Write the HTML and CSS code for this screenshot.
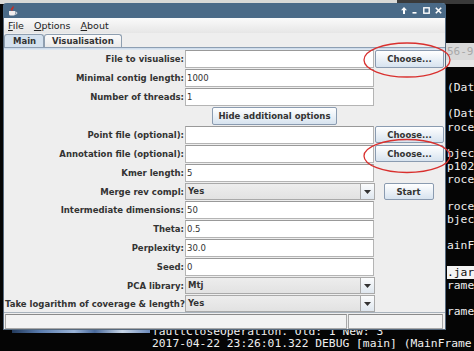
FILE: index.html
```html
<!DOCTYPE html>
<html>
<head>
<meta charset="utf-8">
<link rel="stylesheet" href="styles.css">
</head>
<body>
<div class="desk">
  <div class="topstrip"><div class="ts-light"></div><div class="ts-dark"></div></div>
  <div class="graybox">56-9</div>
  <pre class="term-right">(Dat

(Dat
roce

bjec
p102
roce

roce
bjec

ainF

<span class="hl">.jar</span>
rame

rame

</pre>
  <div class="strip"></div>
  <pre class="term-bottom">faultCloseOperation. Old: 1 New: 3
2017-04-22 23:26:01.322 DEBUG [main] (MainFrame</pre>

  <div class="appwin">
    <div class="titlebar">
      <svg class="appicon" width="11" height="11" viewBox="0 0 11 11">
        <path d="M2 6 H8 V9 Q8 10.5 6.5 10.5 H3.5 Q2 10.5 2 9 Z" fill="#f2eeee"/>
        <path d="M8 7 Q10 7 10 8 Q10 9.2 8 9.2" fill="none" stroke="#f2eeee" stroke-width="0.9"/>
        <path d="M4 5.5 Q3 3.5 5 2.5 Q6.5 1.5 5.5 0.5 Q8 2 6 4 Q5 5 6 5.5 Z" fill="#c0302a"/>
      </svg>
      <div class="tbtns">
        <svg width="6" height="7" viewBox="0 0 6 7"><path d="M3 0 L6 3.2 H4 V7 H2 V3.2 H0 Z" fill="#fff"/></svg>
        <svg width="6" height="7" viewBox="0 0 6 7"><rect x="0.5" y="5" width="4" height="1.6" fill="#fff"/></svg>
        <svg width="7" height="7" viewBox="0 0 7 7"><rect x="0.8" y="0.8" width="5.4" height="5.4" fill="none" stroke="#fff" stroke-width="1.4"/></svg>
        <svg width="7" height="7" viewBox="0 0 7 7"><path d="M0.8 0.8 L6.2 6.2 M6.2 0.8 L0.8 6.2" stroke="#fff" stroke-width="1.6"/></svg>
      </div>
    </div>
    <div class="menubar">
      <span class="menu"><u>F</u>ile</span>
      <span class="menu"><u>O</u>ptions</span>
      <span class="menu"><u>A</u>bout</span>
    </div>
    <div class="tabs">
      <div class="tab sel">Main</div>
      <div class="tab">Visualisation</div>
    </div>
    <div class="panel">
      <div class="form">
        <div class="lbl">File to visualise:</div>
        <div class="field"></div>
        <div class="btn choose">Choose...</div>

        <div class="lbl">Minimal contig length:</div>
        <div class="field">1000</div>
        <div class="empty"></div>

        <div class="lbl">Number of threads:</div>
        <div class="field">1</div>
        <div class="empty"></div>

        <div class="empty"></div>
        <div class="hidecell"><div class="btn hide">Hide additional options</div></div>
        <div class="empty"></div>

        <div class="lbl">Point file (optional):</div>
        <div class="field"></div>
        <div class="btn choose short">Choose...</div>

        <div class="lbl">Annotation file (optional):</div>
        <div class="field"></div>
        <div class="btn choose short">Choose...</div>

        <div class="lbl">Kmer length:</div>
        <div class="field">5</div>
        <div class="empty"></div>

        <div class="lbl">Merge rev compl:</div>
        <div class="combo"><span class="cval">Yes</span><span class="carrow"><svg width="7" height="4" viewBox="0 0 7 4"><path d="M0 0 H7 L3.5 4 Z" fill="#333"/></svg></span></div>
        <div class="startcell"><div class="btn start">Start</div></div>

        <div class="lbl">Intermediate dimensions:</div>
        <div class="field">50</div>
        <div class="empty"></div>

        <div class="lbl">Theta:</div>
        <div class="field">0.5</div>
        <div class="empty"></div>

        <div class="lbl">Perplexity:</div>
        <div class="field">30.0</div>
        <div class="empty"></div>

        <div class="lbl">Seed:</div>
        <div class="field">0</div>
        <div class="empty"></div>

        <div class="lbl">PCA library:</div>
        <div class="combo"><span class="cval">Mtj</span><span class="carrow"><svg width="7" height="4" viewBox="0 0 7 4"><path d="M0 0 H7 L3.5 4 Z" fill="#333"/></svg></span></div>
        <div class="empty"></div>

        <div class="lbl">Take logarithm of coverage &amp; length?</div>
        <div class="combo"><span class="cval">Yes</span><span class="carrow"><svg width="7" height="4" viewBox="0 0 7 4"><path d="M0 0 H7 L3.5 4 Z" fill="#333"/></svg></span></div>
        <div class="empty"></div>
      </div>
    </div>
    <div class="status">
      <div class="sfield s1"></div>
      <div class="sfield s2"></div>
    </div>
  </div>

  <svg class="ring ring1" width="90" height="38" viewBox="0 0 90 38"><ellipse cx="45" cy="19" rx="43" ry="17" fill="none" stroke="#d9302e" stroke-width="1.3"/></svg>
  <svg class="ring ring2" width="90" height="38" viewBox="0 0 90 38"><ellipse cx="45" cy="19" rx="43" ry="16.5" fill="none" stroke="#d9302e" stroke-width="1.3"/></svg>
</div>
</body>
</html>
```

FILE: styles.css
```css
html, body {
  margin: 0;
  padding: 0;
  background: #000;
}
.desk {
  position: relative;
  width: 474px;
  height: 351px;
  overflow: hidden;
  background: #050505;
  font-family: "DejaVu Sans", sans-serif;
}
.topstrip {
  position: absolute;
  left: 0;
  top: 0;
  width: 474px;
  height: 4px;
  display: flex;
}
.ts-light { width: 397px; background: #d9d9d6; }
.ts-dark { flex: 1; background: #3a3a3a; }

.graybox {
  position: absolute;
  left: 440px;
  top: 43px;
  width: 34px;
  height: 24px;
  background: linear-gradient(#d9d9d9 0, #d9d9d9 17px, #e6e6e6 17px);
  color: #a8a8a8;
  font-family: "DejaVu Sans Mono", monospace;
  font-size: 11px;
  line-height: 18px;
  box-sizing: border-box;
  padding-left: 7px;
}

.term-right {
  position: absolute;
  left: 447px;
  top: 81px;
  margin: 0;
  font-family: "DejaVu Sans Mono", monospace;
  font-size: 11.3px;
  line-height: 13.2px;
  color: #eeeeee;
}
.term-right .hl {
  background: #f4f4f4;
  color: #111;
}
.strip {
  position: absolute;
  left: 12px;
  top: 329px;
  width: 138px;
  height: 4px;
  background: linear-gradient(90deg, #233a5c, #5a7cae 20%, #9ab4d8 45%, #4a6a9c 60%, #c8d6e8 80%, #6d8bbb);
}
.term-bottom {
  position: absolute;
  left: 152px;
  top: 326px;
  margin: 0;
  font-family: "DejaVu Sans Mono", monospace;
  font-size: 11.3px;
  line-height: 12.4px;
  color: #f0f0f0;
}

.appwin {
  position: absolute;
  left: 3px;
  top: 3px;
  width: 443px;
  height: 327px;
  display: flex;
  flex-direction: column;
  background: #eeeeee;
  box-sizing: border-box;
  border-left: 1px solid #56697d;
  border-right: 1px solid #56697d;
  border-bottom: 1px solid #56697d;
  border-radius: 4px 4px 0 0;
}
.titlebar {
  height: 15px;
  flex: none;
  background: #4a6a87;
  border-radius: 4px 4px 0 0;
  display: flex;
  align-items: center;
  padding: 0 4px 0 4px;
  margin: 0 -1px;
}
.appicon { display: block; }
.tbtns {
  margin-left: auto;
  display: flex;
  align-items: center;
  gap: 5px;
}
.tbtns svg { display: block; }

.menubar {
  height: 15px;
  flex: none;
  background: linear-gradient(#fafafa, #e6e6e6);
  display: flex;
  align-items: center;
  gap: 10px;
  padding-left: 4px;
  font-size: 9.5px;
  color: #222;
}
.menu u { text-decoration: underline; text-underline-offset: 1px; }

.tabs {
  height: 14px;
  flex: none;
  display: flex;
  align-items: flex-end;
  padding-left: 0;
}
.tab {
  height: 13px;
  box-sizing: border-box;
  border: 1px solid #8f9fb0;
  border-bottom: none;
  border-radius: 3px 3px 0 0;
  padding: 0 7px;
  font-size: 8.5px;
  font-weight: bold;
  color: #333;
  line-height: 12px;
  background: linear-gradient(#fbfbfb, #eaeaea);
}
.tab.sel {
  background: #d4e1ee;
  padding: 0 8px;
  width: 40px;
  text-align: center;
}

.panel {
  flex: none;
  border-top: 1px solid #8d9fb3;
  box-shadow: inset 0 1px 0 #cfdceb, inset 0 2px 0 #dde7f1;
  padding-top: 2px;
  border-bottom: 1px solid #a9b3bd;
}
.form {
  display: grid;
  grid-template-columns: 181px 189px 1fr;
  grid-template-rows: repeat(7, 18px) 17px repeat(4, 18px) 17px 17px;
  row-gap: 1px;
}
.lbl {
  font-size: 8.5px;
  font-weight: bold;
  color: #333;
  text-align: right;
  align-self: center;
  white-space: nowrap;
  padding-right: 1px;
  padding-left: 1px;
  line-height: 12px;
}
.field {
  background: #fff;
  border: 1px solid #b4b4b4;
  border-top-color: #999;
  font-size: 8.5px;
  color: #333;
  line-height: 16px;
  padding-left: 1px;
}
.btn {
  box-sizing: border-box;
  border: 1px solid #8a9bb0;
  border-radius: 2px;
  background: linear-gradient(#ffffff, #d7e3ef);
  font-size: 8.5px;
  font-weight: bold;
  color: #333;
  text-align: center;
  display: flex;
  align-items: center;
  justify-content: center;
}
.choose {
  margin-left: 1px;
  width: 69px;
  height: 18px;
}
.choose.short { height: 17px; }
.hidecell { display: flex; }
.hide {
  margin-left: 27px;
  width: 125px;
  height: 18px;
}
.startcell {
  display: flex;
  justify-content: center;
  padding-right: 2px;
}
.start {
  width: 50px;
  height: 17px;
}
.combo {
  display: flex;
  box-sizing: border-box;
  border: 1px solid #a9a9a9;
  background: linear-gradient(#ededed, #e2e2e2);
  margin-right: -1px;
}
.cval {
  flex: 1;
  font-size: 8.5px;
  font-weight: bold;
  color: #333;
  line-height: 15px;
  padding-left: 2px;
}
.carrow {
  width: 13px;
  border-left: 1px solid #a9a9a9;
  background: linear-gradient(#fbfcfd, #dfe7ef);
  display: flex;
  align-items: center;
  justify-content: center;
}
.carrow svg { display: block; }

.status {
  flex: 1;
  display: flex;
  align-items: flex-start;
  padding-top: 1px;
  gap: 1px;
  padding-left: 1px;
}
.sfield {
  height: 15px;
  box-sizing: border-box;
  background: #f3f3f3;
  border: 1px solid #a8a8a8;
  border-top-color: #8a8a8a;
}
.s1 { width: 342px; }
.s2 { width: 95px; }

.ring {
  position: absolute;
}
.ring1 { left: 362px; top: 41px; }
.ring2 { left: 362px; top: 137px; }
```
